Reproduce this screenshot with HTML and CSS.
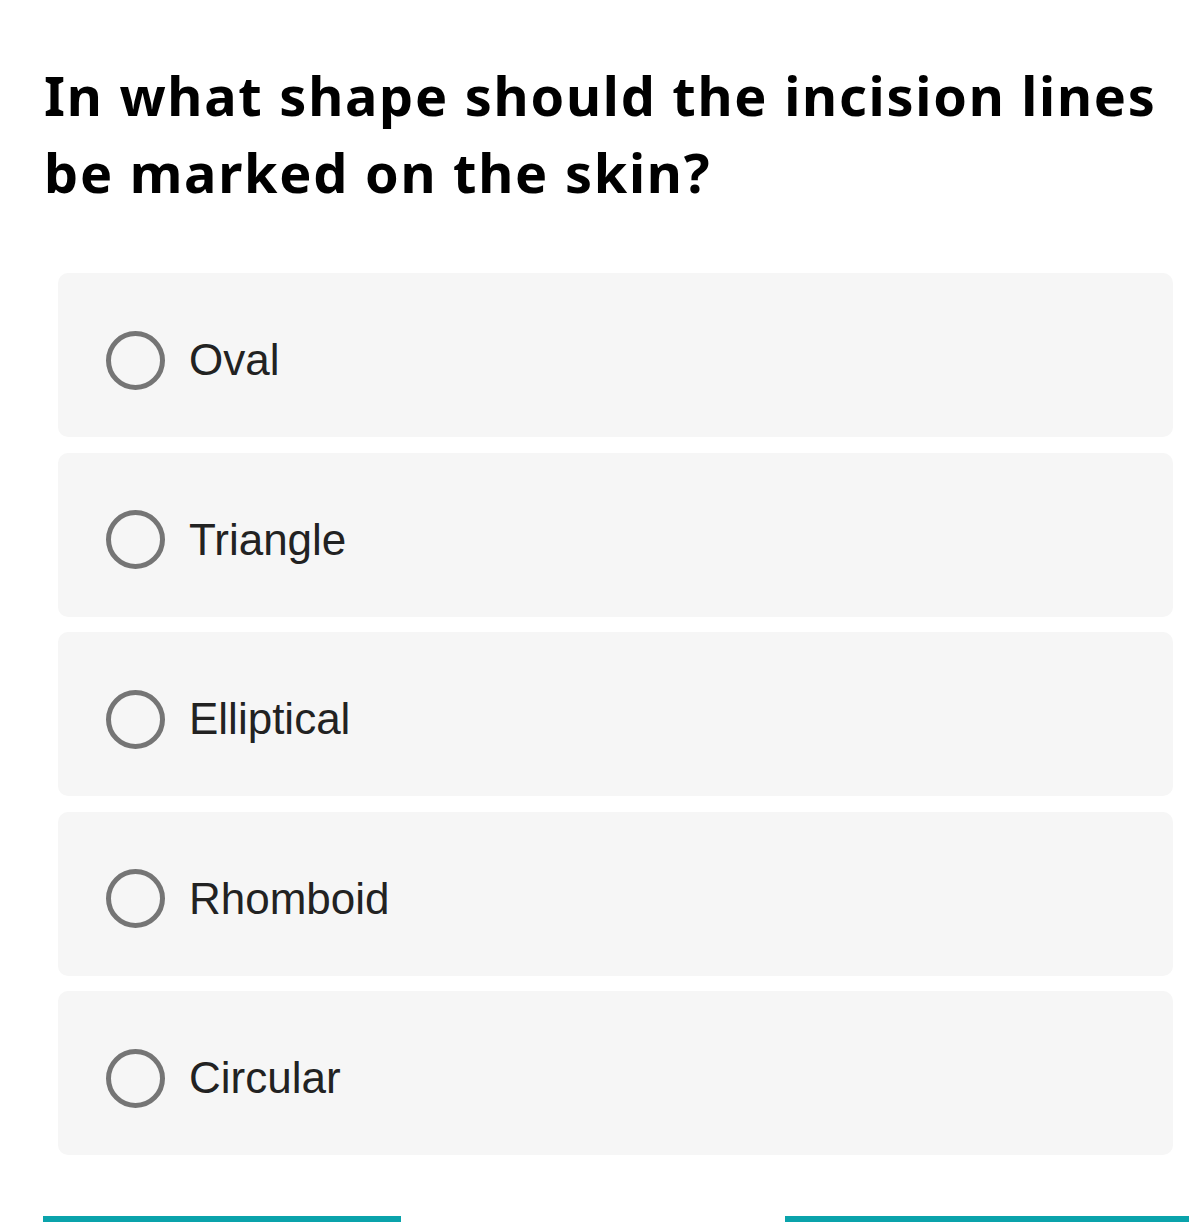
FILE: index.html
```html
<!DOCTYPE html>
<html lang="en">
<head>
<meta charset="utf-8">
<title>Question</title>
<link rel="stylesheet" href="styles.css">
</head>
<body>
<main class="quiz">
  <h1 class="question">In what shape should the incision lines be marked on the skin?</h1>
  <ul class="options">
    <li class="option"><span class="radio"></span><span class="label">Oval</span></li>
    <li class="option"><span class="radio"></span><span class="label">Triangle</span></li>
    <li class="option"><span class="radio"></span><span class="label">Elliptical</span></li>
    <li class="option"><span class="radio"></span><span class="label">Rhomboid</span></li>
    <li class="option"><span class="radio"></span><span class="label">Circular</span></li>
  </ul>
  <div class="actions">
    <div class="action action-back"></div>
    <div class="action action-next"></div>
  </div>
</main>
</body>
</html>
```
FILE: styles.css
```css
html, body {
  margin: 0;
  padding: 0;
  background: #ffffff;
}

.quiz {
  padding: 0 9px 0 44px;
  height: 1222px;
  box-sizing: border-box;
  overflow: hidden;
}

.question {
  margin: 0;
  padding-top: 57px;
  font-family: "Noto Sans", sans-serif;
  font-weight: 700;
  font-size: 54px;
  line-height: 77px;
  letter-spacing: 1.75px;
  color: #000000;
  width: 1145px;
}

.options {
  list-style: none;
  margin: 62px 16px 0 14px;
  padding: 0;
  display: flex;
  flex-direction: column;
  gap: 15.5px;
}

.option {
  height: 164px;
  box-sizing: border-box;
  padding: 10px 0 0 48px;
  display: flex;
  align-items: center;
  gap: 24px;
  background: #f6f6f6;
  border-radius: 10px;
}

.radio {
  width: 59px;
  height: 59px;
  box-sizing: border-box;
  border: 5px solid #757575;
  border-radius: 50%;
  flex: none;
}

.label {
  font-family: "Liberation Sans", Arial, sans-serif;
  font-size: 44px;
  color: #222222;
}

.actions {
  margin-top: 61px;
  display: flex;
  justify-content: space-between;
}

.action {
  height: 10px;
  background: #0aa3ab;
}

.action-back {
  width: 358px;
  margin-left: -1px;
}

.action-next {
  width: 404px;
}
```
